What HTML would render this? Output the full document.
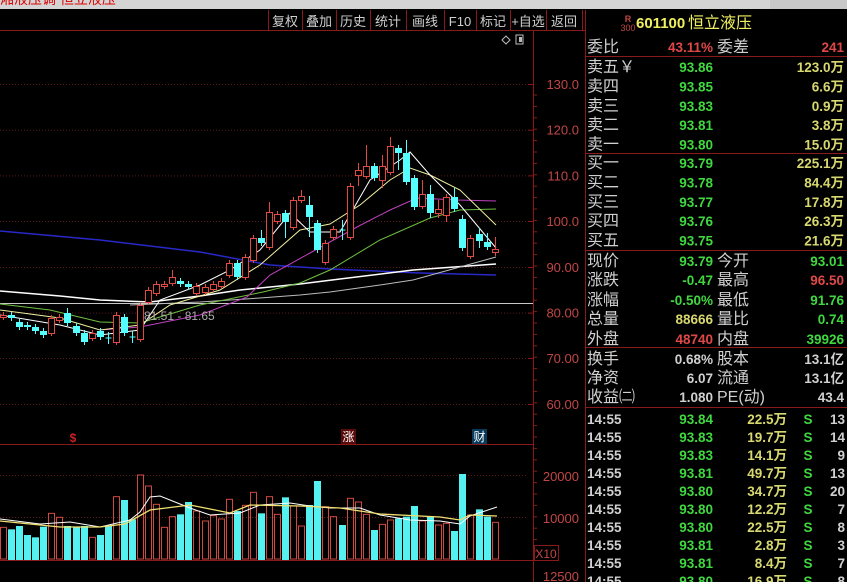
<!DOCTYPE html>
<html><head><meta charset="utf-8"><style>
html,body{margin:0;padding:0;background:#000;width:847px;height:582px;overflow:hidden}
body{position:relative;font-family:"Liberation Sans","Noto Sans CJK SC",sans-serif}
.t{position:absolute;white-space:nowrap;line-height:1}
svg{position:absolute;left:0;top:0}
</style></head><body>
<div style="position:absolute;left:0;top:0;width:847px;height:9px;background:#d4d4d4"></div>
<div class="t" style="left:0;top:-8px;font-size:14px;color:#d00">湘液压调 恒立液压</div>
<div style="position:absolute;left:770px;top:0;width:77px;height:9px;background:#c8c8c8"></div>
<svg width="847" height="582" id="s"></svg>
<div id="r"></div>
<script>
var S=document.getElementById('s'),h='';
function L(x1,y1,x2,y2,c,w,d){h+='<line x1="'+x1+'" y1="'+y1+'" x2="'+x2+'" y2="'+y2+'" stroke="'+c+'" stroke-width="'+(w||1)+'"'+(d?' stroke-dasharray="'+d+'"':'')+'/>';}
function T(x,y,t,c,sz,a,w){h+='<text x="'+x+'" y="'+y+'" fill="'+c+'" font-size="'+sz+'" text-anchor="'+(a||'start')+'" font-family="Liberation Sans,Noto Sans CJK SC,sans-serif"'+(w?' font-weight="bold"':'')+'>'+t+'</text>';}
function P(pts,c,w){h+='<polyline fill="none" stroke="'+c+'" stroke-width="'+(w||1)+'" points="'+pts+'"/>';}
var R='#8a1a1a';
// toolbar
L(0,30.5,585,30.5,R);
var bx=[268,302,336,370,406,444,476,510,546,582],bt=['复权','叠加','历史','统计','画线','F10','标记','+自选','返回'];
for(var i=0;i<bx.length;i++)L(bx[i]+.5,10,bx[i]+.5,30,R);
for(i=0;i<bt.length;i++)T((bx[i]+bx[i+1])/2,26,bt[i],'#cfcfcf',13,'middle');
// diamond icon
h+='<path d="M506 36 L510 40 L506 44 L502 40Z" fill="none" stroke="#bbb"/>';
h+='<rect x="516" y="35" width="7" height="9" fill="none" stroke="#bbb"/><rect x="519" y="37" width="3" height="5" fill="#bbb"/>';
// axis
L(533.5,31,533.5,582,R);L(585.5,10,585.5,582,R);
var pl=[['130.0',84],['120.0',129.7],['110.0',175.4],['100.0',221],['90.00',267],['80.00',312.6],['70.00',358],['60.00',404]];
pl.forEach(function(p){L(0,p[1]+.5,528,p[1]+.5,'#5a1a1a',1,'1,2');L(528,p[1]+.5,533,p[1]+.5,R);T(579,p[1]+5,p[0],'#c24646',13,'end');});
for(var y=95;y<560;y+=11.4)L(533,y,537,y,R);
// volume panel
L(0,444.5,533,444.5,R);L(0,560.5,533,560.5,R);
L(0,475.5,528,475.5,'#5a1a1a',1,'1,2');L(0,517.5,528,517.5,'#5a1a1a',1,'1,2');
T(579,481,'20000','#c24646',13,'end');T(579,523,'10000','#c24646',13,'end');T(579,581,'12500','#c24646',13,'end');
h+='<rect x="534.5" y="545.5" width="24" height="15" fill="none" stroke="'+R+'"/>';T(546,558,'X10','#c24646',12,'middle');
T(73,442,'$','#c22',12,'middle',1);
h+='<rect x="341" y="429" width="15" height="15" fill="#5a0a0a"/>';T(348.5,441,'涨','#fff',12,'middle');
h+='<rect x="472" y="429" width="15" height="15" fill="#0a3a5a"/>';T(479.5,441,'财','#fff',12,'middle');
// MA lines
P('0,231 100,240 200,252 270,265 330,269 420,273 496,275','#2828c8',1.5);
L(0,303.5,533,303.5,'#c8c8c8');
P('0,291 60,296 100,300 150,302 200,296 240,290 300,284 340,279 413,270 496,264','#fff',1.5);
P('130,305 200,302 260,298 300,295 330,292 380,285 413,280 496,257','#bbb');
P('0,304 50,310 100,322 140,323 200,305 263,292 300,283 330,270 380,240 430,218 460,210 496,209','#6fc040');
P('100,330 140,327 200,315 247,297 270,275 310,253 357,227 390,210 417,198 457,200 496,201','#c040c0');
P('0,310 60,318 100,330 140,325 170,305 220,290 260,265 300,230 330,224 360,205 390,180 410,168 430,175 460,190 496,225','#f0f0a0');
P('0,315 60,325 100,335 140,330 160,300 200,285 230,270 260,250 290,213 310,232 340,232 370,180 400,160 410,152 430,175 460,205 496,248','#fff');
T(144,320,'81.51 - 81.65','#aaa',12);
// candles
var C=[['r',315,317],['c',315,318],['c',322,327],['c',325,327],['c',327,331],['c',331,335],['r',318,333],['r',317,320],['c',313,323,308],['c',326,333],['c',333,342],['r',333,338],['c',331,337],['x',338],['r',315,342],['c',317,333],['x',337],['r',305,339],['r',290,302],['r',284,293],['r',284,286],['r',277,283,270],['c',281,284],['c',284,287],['r',286,293],['r',287,292],['r',284,289],['r',281,286],['r',263,275],['c',263,277],['r',257,277],['r',238,260],['c',238,243,230],['r',212,247,202],['r',214,221],['c',213,222,210,238],['r',200,227],['r',196,200,190],['c',205,217,196,237],['c',223,250],['r',243,262],['r',229,237],['x',230,220,240],['r',186,237],['r',170,175,163,186],['r',166,176,145],['c',166,178],['r',166,180,155,188],['r',146,172,137],['c',148,153,145,170],['c',153,182,140],['c',178,207],['r',194,206,180],['c',194,213,185,218],['r',209,213,200,218],['r',197,215,194,222],['c',197,209,188],['c',219,248,215],['r',238,256],['c',234,241,228,248],['c',242,247,233],['r',249,252,237,256]];
C.forEach(function(c,i){var x=Math.round(3+i*8.06)+.5;
 if(c[0]=='x'){var hi=c[2]||c[1]-6,lo=c[3]||c[1]+6;L(x,hi,x,lo,'#5ff');L(x-3,c[1],x+3,c[1],'#5ff');return;}
 var t=c[1],b=c[2],hi=c[3]||t-3,lo=c[4]||b+3,col=c[0]=='r'?'#e04a40':'#55ffff';
 L(x,hi,x,lo,col);
 if(c[0]=='r')h+='<rect x="'+(x-3)+'" y="'+(t+.5)+'" width="6" height="'+Math.max(b-t,1)+'" fill="#000" stroke="'+col+'"/>';
 else h+='<rect x="'+(x-3.5)+'" y="'+t+'" width="7" height="'+Math.max(b-t,1)+'" fill="'+col+'"/>';
});
// volume
var V=[322,328,318,345,352,320,280,292,318,322,318,352,345,318,230,240,298,165,198,253,322,290,283,246,273,303,287,297,238,273,256,217,280,230,283,232,258,318,255,183,260,290,315,235,246,283,330,313,300,295,290,258,303,290,315,310,333,162,285,268,290,307];
V.forEach(function(v,i){var x=Math.round(3+i*8.06)+.5,t=420+v/3,red=C[i][0]=='r';
 if(red)h+='<rect x="'+(x-3)+'" y="'+t+'" width="6" height="'+(559-t)+'" fill="none" stroke="#d04a40"/>';
 else h+='<rect x="'+(x-3.5)+'" y="'+t+'" width="7" height="'+(560-t)+'" fill="#55f0f0"/>';});
P('0,519 40,524 70,522 100,527 130,520 140,512 150,497 160,496 175,502 190,508 210,515 240,513 260,505 290,503 310,506 330,508 360,508 380,515 410,520 440,521 460,524 470,516 497,507','#fff');
P('0,521 60,527 100,527 125,524 150,510 190,505 230,513 250,505 300,506 340,508 380,514 440,517 460,520 470,515 497,516','#f0e070',1.3);
// right panel
T(628,22,'R','#c24646',9,'middle',1);T(628,31,'300','#c24646',9,'middle');
T(636,28,'601100','#f0f060',15,'start',1);T(688,28,'恒立液压','#f0f060',16);
var G='#3fd83f',Y='#d8d870',Rd='#e04848',W='#d0d0d0';
[56,153,250,347,407].forEach(function(y){L(585,y+.5,847,y+.5,R);});
function row(y,a,b,bc,c,d,dc){T(587,y,a,W,16);T(713,y,b,bc,13.5,'end',1);if(c)T(717,y,c,W,16);T(844,y,d,dc,13.5,'end',1);}
row(52,'委比','43.11%',Rd,'委差','241',Rd);
var sell=[['卖五￥','93.86','123.0万'],['卖四','93.85','6.6万'],['卖三','93.83','0.9万'],['卖二','93.81','3.8万'],['卖一','93.80','15.0万']];
sell.forEach(function(s,i){row(72+i*19.4,s[0],s[1],G,'',s[2],Y);});
var buy=[['买一','93.79','225.1万'],['买二','93.78','84.4万'],['买三','93.77','17.8万'],['买四','93.76','26.3万'],['买五','93.75','21.6万']];
buy.forEach(function(s,i){row(168+i*19.4,s[0],s[1],G,'',s[2],Y);});
row(266,'现价','93.79',G,'今开','93.01',G);
row(285,'涨跌','-0.47',G,'最高','96.50',Rd);
row(305,'涨幅','-0.50%',G,'最低','91.76',G);
row(324,'总量','88666',Y,'量比','0.74',G);
row(344,'外盘','48740',Rd,'内盘','39926',G);
row(364,'换手','0.68%',W,'股本','13.1亿',W);
row(383,'净资','6.07',W,'流通','13.1亿',W);
row(402,'收益㈡','1.080',W,'PE(动)','43.4',W);
var tk=[['93.84','22.5万','13'],['93.83','19.7万','14'],['93.83','14.1万','9'],['93.81','49.7万','13'],['93.80','34.7万','20'],['93.80','12.2万','7'],['93.80','22.5万','8'],['93.81','2.8万','3'],['93.81','8.4万','7'],['93.80','16.9万','8']];
tk.forEach(function(k,i){var y=424+i*18;T(587,y,'14:55',W,13.5,'start',1);T(713,y,k[0],G,13.5,'end',1);T(787,y,k[1],Y,13.5,'end',1);T(808,y,'S',G,13.5,'middle',1);T(845,y,k[2],W,13.5,'end',1);});
S.innerHTML=h;
</script>
</body></html>
